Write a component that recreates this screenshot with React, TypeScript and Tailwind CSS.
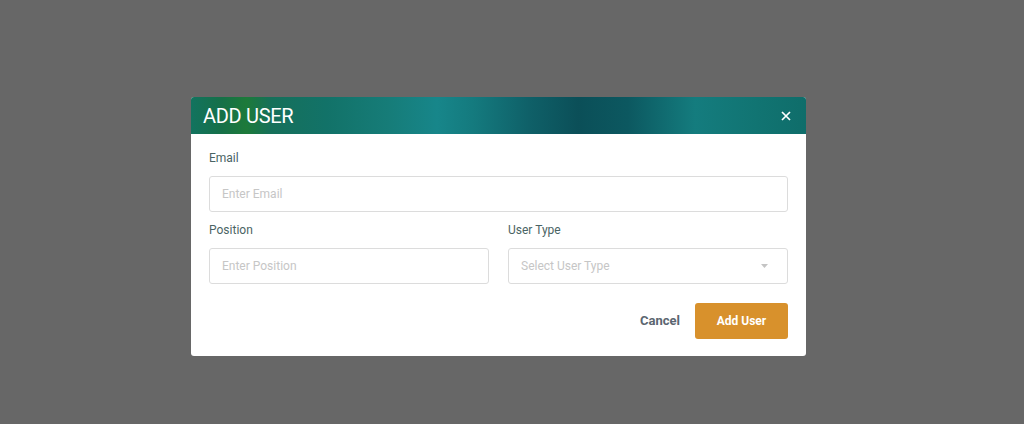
import { useState } from "react";

// Add user modal over a dimmed page
const App = () => {
  const [email, setEmail] = useState("");
  const [position, setPosition] = useState("");
  const [userType, setUserType] = useState("");

  return (
    <div className="w-full h-[424px] bg-[#676767] flex items-start pl-[191px] pt-[97px] font-['Roboto',sans-serif]">
      <div className="w-[615px] bg-white rounded-[3px] overflow-hidden">
        <div className="h-[37px] flex items-center justify-between pl-[12px] pr-[15px] bg-[linear-gradient(90deg,#12735f_0%,#167048_5%,#1d7a3a_9%,#16705a_13%,#127268_22%,#167c78_32%,#17868a_40%,#147a7e_46%,#0f6068_55%,#0b4f58_63%,#0c5860_71%,#147c7e_82%,#117472_92%,#0f6d6a_100%)]">
          <h2 className="text-white text-[20px] leading-none tracking-[-0.3px]">ADD USER</h2>
          <button className="text-white">
            <svg width="10" height="10" viewBox="0 0 10 10">
              <path d="M1 1L9 9M9 1L1 9" stroke="white" strokeWidth="1.7" />
            </svg>
          </button>
        </div>
        <div className="px-[18px] pt-[17px] pb-[17px]">
          <label className="block text-[12px] text-[#4a6464] leading-[15px]">Email</label>
          <input
            value={email}
            onChange={(e) => setEmail(e.target.value)}
            placeholder="Enter Email"
            className="mt-[10px] w-full h-[36px] border border-[#dcdcdc] rounded-[3px] px-[12px] text-[12px] outline-none placeholder:text-[#c6c6c6]"
          />
          <div className="mt-[11px] grid grid-cols-2 gap-[19px]">
            <div>
              <label className="block text-[12px] text-[#4a6464] leading-[15px]">Position</label>
              <input
                value={position}
                onChange={(e) => setPosition(e.target.value)}
                placeholder="Enter Position"
                className="mt-[10px] w-full h-[36px] border border-[#dcdcdc] rounded-[3px] px-[12px] text-[12px] outline-none placeholder:text-[#c6c6c6]"
              />
            </div>
            <div>
              <label className="block text-[12px] text-[#4a6464] leading-[15px]">User Type</label>
              <div className="mt-[10px] w-full h-[36px] border border-[#dcdcdc] rounded-[3px] pl-[12px] pr-[19px] flex items-center justify-between">
                <span className={userType ? "text-[12px] text-[#333]" : "text-[12px] text-[#c6c6c6]"} onClick={() => setUserType("")}>
                  {userType || "Select User Type"}
                </span>
                <svg width="7" height="4" viewBox="0 0 7 4">
                  <path d="M0 0H7L3.5 4Z" fill="#c4c4c4" />
                </svg>
              </div>
            </div>
          </div>
          <div className="mt-[19px] flex items-center justify-end gap-[14px]">
            <button className="px-[1px] text-[13px] font-bold text-[#5b6670]">Cancel</button>
            <button className="w-[93px] h-[36px] rounded-[3px] bg-[#d8912c] text-white text-[12px] font-bold">Add User</button>
          </div>
        </div>
      </div>
    </div>
  );
};

export default App;
